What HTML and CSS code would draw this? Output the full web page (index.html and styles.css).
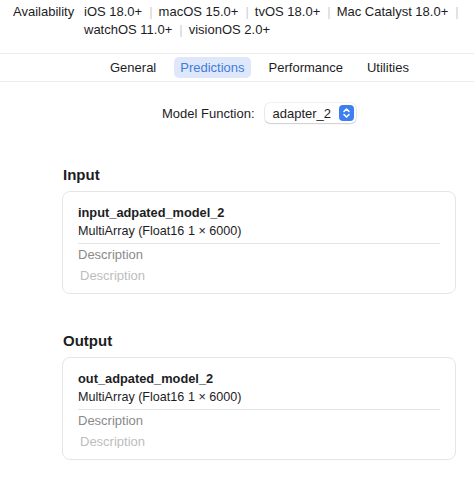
FILE: index.html
```html
<!DOCTYPE html>
<html>
<head>
<meta charset="utf-8">
<link rel="stylesheet" href="styles.css">
</head>
<body>
<div class="availability">
  <div class="av-label">Availability</div>
  <div class="av-list">
    <div class="av-row">
      <span>iOS 18.0+</span><span class="sep">|</span>
      <span>macOS 15.0+</span><span class="sep">|</span>
      <span>tvOS 18.0+</span><span class="sep">|</span>
      <span>Mac Catalyst 18.0+</span><span class="sep">|</span>
    </div>
    <div class="av-row">
      <span>watchOS 11.0+</span><span class="sep">|</span>
      <span>visionOS 2.0+</span>
    </div>
  </div>
</div>
<div class="tabs">
  <div class="tab">General</div>
  <div class="tab active">Predictions</div>
  <div class="tab">Performance</div>
  <div class="tab">Utilities</div>
</div>
<div class="func-row">
  <span class="func-label">Model Function:</span>
  <div class="popup">
    <span>adapter_2</span>
    <span class="stepper">
      <svg width="11" height="14" viewBox="0 0 11 14"><path d="M3 5.5 L5.5 3 L8 5.5 M3 8.5 L5.5 11 L8 8.5" fill="none" stroke="#fff" stroke-width="1.6" stroke-linecap="round" stroke-linejoin="round"/></svg>
    </span>
  </div>
</div>
<section class="section">
  <h2 class="sec-title">Input</h2>
  <div class="card">
    <div class="feat-name">input_adpated_model_2</div>
    <div class="feat-type">MultiArray (Float16 1 × 6000)</div>
    <div class="rule"></div>
    <div class="desc-label">Description</div>
    <div class="desc-field">Description</div>
  </div>
</section>
<section class="section out">
  <h2 class="sec-title">Output</h2>
  <div class="card">
    <div class="feat-name">out_adpated_model_2</div>
    <div class="feat-type">MultiArray (Float16 1 × 6000)</div>
    <div class="rule"></div>
    <div class="desc-label">Description</div>
    <div class="desc-field">Description</div>
  </div>
</section>
</body>
</html>
```
FILE: styles.css
```css
html, body {
  margin: 0;
  padding: 0;
  background: #ffffff;
  font-family: "Liberation Sans", Arial, sans-serif;
  font-size: 13px;
  color: #1d1d1f;
}
.availability {
  display: flex;
  padding: 3px 0 0 13px;
  line-height: 18px;
  height: 54px;
  border-bottom: 1px solid #ececec;
  box-sizing: border-box;
}
.av-label {
  width: 71px;
  flex: none;
}
.av-row {
  display: flex;
  white-space: nowrap;
}
.sep {
  color: #cfcfcf;
  padding: 0 6px 0 7px;
}
.tabs {
  display: flex;
  gap: 12px;
  padding: 3px 0 3px 104px;
  border-bottom: 1px solid #ececec;
}
.tab {
  height: 21px;
  line-height: 21px;
  padding: 0 6px;
  border-radius: 5px;
}
.tab.active {
  background: #dfe8fa;
  color: #3f7be0;
}
.func-row {
  display: flex;
  align-items: center;
  padding-left: 162px;
  margin-top: 21px;
  height: 20px;
}
.func-label {
  margin-right: 10px;
}
.popup {
  display: flex;
  align-items: center;
  justify-content: space-between;
  box-sizing: border-box;
  width: 91px;
  height: 20px;
  padding: 0 2px 0 8px;
  border-radius: 5px;
  background: #fff;
  box-shadow: 0 0 0 0.5px rgba(0,0,0,0.12), 0 1px 1.5px rgba(0,0,0,0.14);
}
.stepper {
  display: flex;
  align-items: center;
  justify-content: center;
  width: 15px;
  height: 16px;
  border-radius: 4px;
  background: #3d7ff2;
}
.section {
  padding: 0 18px 0 62px;
  margin-top: 42px;
}
.section.out {
  margin-top: 37px;
}
.sec-title {
  margin: 0 0 6px 1px;
  font-size: 15px;
  font-weight: bold;
  line-height: 20px;
}
.card {
  border: 1px solid #e6e6e6;
  border-radius: 8px;
  padding: 12px 15px 7px 15px;
  height: 82px;
}
.feat-name {
  font-weight: bold;
  line-height: 18px;
  font-size: 12.8px;
}
.feat-type {
  line-height: 18px;
  font-size: 12.6px;
}
.rule {
  border-top: 1px solid #e4e4e4;
  margin-top: 3px;
}
.desc-label {
  color: #8a8a8a;
  line-height: 18px;
  margin-top: 2px;
}
.desc-field {
  color: #bdbdbd;
  margin-top: 3px;
  padding-left: 2px;
  height: 15px;
  line-height: 17px;
  overflow: hidden;
}
```
